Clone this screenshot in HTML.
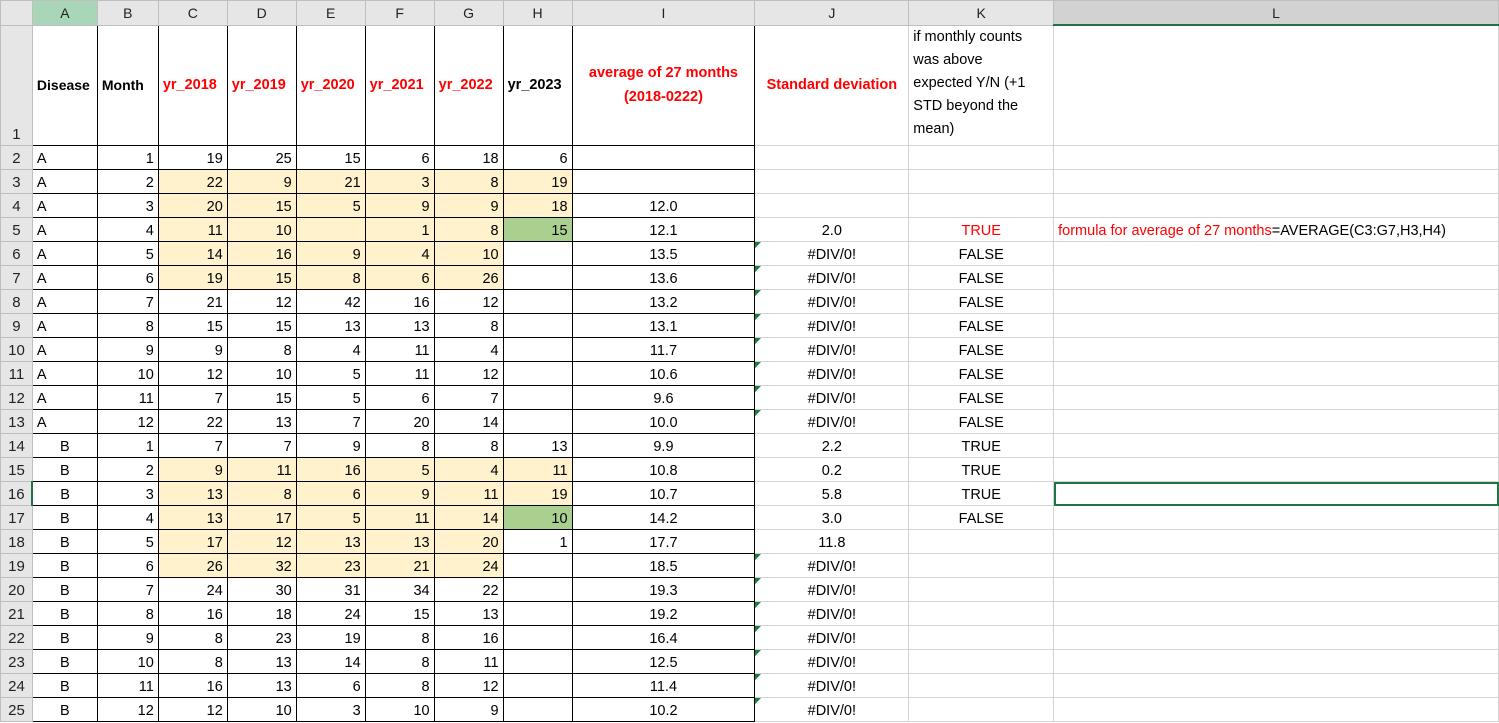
<!DOCTYPE html>
<html><head><meta charset="utf-8">
<style>
html,body{margin:0;padding:0;background:#fff;width:1499px;height:723px;overflow:hidden}
table{border-collapse:collapse;table-layout:fixed;position:absolute;left:0;top:0;font-family:"Liberation Sans",sans-serif;font-size:14.5px;color:#000}
td{height:23px;padding:0 4px;border:1px solid #000;text-align:right;white-space:nowrap;overflow:visible;vertical-align:bottom;line-height:20px;position:relative}
td.j,td.k,td.L{border:1px solid #d4d4d4;text-align:center}
td.j{border-left:1px solid #000}
td.L{text-align:left}
th{background:#e6e6e6;font-weight:normal;border:1px solid #bfbfbf;color:#222;font-size:14px;line-height:22px;height:23px;padding:0}
td.h{background:#e6e6e6;border:1px solid #bfbfbf;color:#222;text-align:center;padding:0;font-size:15px}
tr.r1 td{height:119px;vertical-align:middle}
tr.r1 td.h{vertical-align:bottom}
.y{background:#fff2cc}.g{background:#a9d08e}
.l{text-align:left}.c{text-align:center}
.red{color:#f00}.b{font-weight:bold}
.tri::before{content:"";position:absolute;left:0;top:0;border-top:6px solid #1e7b34;border-right:6px solid transparent}
.sel{outline:2px solid #217346;outline-offset:-2px}
</style></head><body>
<table>
<colgroup><col style="width:32px"><col style="width:65px"><col style="width:61px"><col style="width:69px"><col style="width:69px"><col style="width:69px"><col style="width:69px"><col style="width:69px"><col style="width:69px"><col style="width:183px"><col style="width:154px"><col style="width:145px"><col style="width:445px"></colgroup>
<tr><th></th><th style="background:#a9d5b8">A</th><th>B</th><th>C</th><th>D</th><th>E</th><th>F</th><th>G</th><th>H</th><th>I</th><th>J</th><th>K</th><th style="background:#d2d2d2;border-bottom:2px solid #217346">L</th></tr>
<tr class="r1"><td class="h">1</td><td class="l b" style="font-size:14px">Disease</td><td class="l b" style="font-size:14px">Month</td><td class="l b red">yr_2018</td><td class="l b red">yr_2019</td><td class="l b red">yr_2020</td><td class="l b red">yr_2021</td><td class="l b red">yr_2022</td><td class="l b">yr_2023</td><td class="c b red" style="line-height:24px">average of 27 months<br>(2018-0222)</td><td class="j b red">Standard deviation</td><td class="k" style="text-align:left;line-height:23px;vertical-align:top">if monthly counts<br>was above<br>expected Y/N (+1<br>STD beyond the<br>mean)</td><td class="L"></td></tr>
<tr><td class="h">2</td><td class="l">A</td><td>1</td><td>19</td><td>25</td><td>15</td><td>6</td><td>18</td><td>6</td><td></td><td class="j"></td><td class="k"></td><td class="L"></td></tr>
<tr><td class="h">3</td><td class="l">A</td><td>2</td><td class="y">22</td><td class="y">9</td><td class="y">21</td><td class="y">3</td><td class="y">8</td><td class="y">19</td><td></td><td class="j"></td><td class="k"></td><td class="L"></td></tr>
<tr><td class="h">4</td><td class="l">A</td><td>3</td><td class="y">20</td><td class="y">15</td><td class="y">5</td><td class="y">9</td><td class="y">9</td><td class="y">18</td><td class="c">12.0</td><td class="j"></td><td class="k"></td><td class="L"></td></tr>
<tr><td class="h">5</td><td class="l">A</td><td>4</td><td class="y">11</td><td class="y">10</td><td class="y"></td><td class="y">1</td><td class="y">8</td><td class="g">15</td><td class="c">12.1</td><td class="j">2.0</td><td class="k red">TRUE</td><td class="L"><span class="red">formula for average of 27 months</span>=AVERAGE(C3:G7,H3,H4)</td></tr>
<tr><td class="h">6</td><td class="l">A</td><td>5</td><td class="y">14</td><td class="y">16</td><td class="y">9</td><td class="y">4</td><td class="y">10</td><td></td><td class="c">13.5</td><td class="j tri">#DIV/0!</td><td class="k">FALSE</td><td class="L"></td></tr>
<tr><td class="h">7</td><td class="l">A</td><td>6</td><td class="y">19</td><td class="y">15</td><td class="y">8</td><td class="y">6</td><td class="y">26</td><td></td><td class="c">13.6</td><td class="j tri">#DIV/0!</td><td class="k">FALSE</td><td class="L"></td></tr>
<tr><td class="h">8</td><td class="l">A</td><td>7</td><td>21</td><td>12</td><td>42</td><td>16</td><td>12</td><td></td><td class="c">13.2</td><td class="j tri">#DIV/0!</td><td class="k">FALSE</td><td class="L"></td></tr>
<tr><td class="h">9</td><td class="l">A</td><td>8</td><td>15</td><td>15</td><td>13</td><td>13</td><td>8</td><td></td><td class="c">13.1</td><td class="j tri">#DIV/0!</td><td class="k">FALSE</td><td class="L"></td></tr>
<tr><td class="h">10</td><td class="l">A</td><td>9</td><td>9</td><td>8</td><td>4</td><td>11</td><td>4</td><td></td><td class="c">11.7</td><td class="j tri">#DIV/0!</td><td class="k">FALSE</td><td class="L"></td></tr>
<tr><td class="h">11</td><td class="l">A</td><td>10</td><td>12</td><td>10</td><td>5</td><td>11</td><td>12</td><td></td><td class="c">10.6</td><td class="j tri">#DIV/0!</td><td class="k">FALSE</td><td class="L"></td></tr>
<tr><td class="h">12</td><td class="l">A</td><td>11</td><td>7</td><td>15</td><td>5</td><td>6</td><td>7</td><td></td><td class="c">9.6</td><td class="j tri">#DIV/0!</td><td class="k">FALSE</td><td class="L"></td></tr>
<tr><td class="h">13</td><td class="l">A</td><td>12</td><td>22</td><td>13</td><td>7</td><td>20</td><td>14</td><td></td><td class="c">10.0</td><td class="j tri">#DIV/0!</td><td class="k">FALSE</td><td class="L"></td></tr>
<tr><td class="h">14</td><td class="c">B</td><td>1</td><td>7</td><td>7</td><td>9</td><td>8</td><td>8</td><td>13</td><td class="c">9.9</td><td class="j">2.2</td><td class="k">TRUE</td><td class="L"></td></tr>
<tr><td class="h">15</td><td class="c">B</td><td>2</td><td class="y">9</td><td class="y">11</td><td class="y">16</td><td class="y">5</td><td class="y">4</td><td class="y">11</td><td class="c">10.8</td><td class="j">0.2</td><td class="k">TRUE</td><td class="L"></td></tr>
<tr><td class="h" style="border-right:2px solid #217346">16</td><td class="c">B</td><td>3</td><td class="y">13</td><td class="y">8</td><td class="y">6</td><td class="y">9</td><td class="y">11</td><td class="y">19</td><td class="c">10.7</td><td class="j">5.8</td><td class="k">TRUE</td><td class="L sel"></td></tr>
<tr><td class="h">17</td><td class="c">B</td><td>4</td><td class="y">13</td><td class="y">17</td><td class="y">5</td><td class="y">11</td><td class="y">14</td><td class="g">10</td><td class="c">14.2</td><td class="j">3.0</td><td class="k">FALSE</td><td class="L"></td></tr>
<tr><td class="h">18</td><td class="c">B</td><td>5</td><td class="y">17</td><td class="y">12</td><td class="y">13</td><td class="y">13</td><td class="y">20</td><td>1</td><td class="c">17.7</td><td class="j">11.8</td><td class="k"></td><td class="L"></td></tr>
<tr><td class="h">19</td><td class="c">B</td><td>6</td><td class="y">26</td><td class="y">32</td><td class="y">23</td><td class="y">21</td><td class="y">24</td><td></td><td class="c">18.5</td><td class="j tri">#DIV/0!</td><td class="k"></td><td class="L"></td></tr>
<tr><td class="h">20</td><td class="c">B</td><td>7</td><td>24</td><td>30</td><td>31</td><td>34</td><td>22</td><td></td><td class="c">19.3</td><td class="j tri">#DIV/0!</td><td class="k"></td><td class="L"></td></tr>
<tr><td class="h">21</td><td class="c">B</td><td>8</td><td>16</td><td>18</td><td>24</td><td>15</td><td>13</td><td></td><td class="c">19.2</td><td class="j tri">#DIV/0!</td><td class="k"></td><td class="L"></td></tr>
<tr><td class="h">22</td><td class="c">B</td><td>9</td><td>8</td><td>23</td><td>19</td><td>8</td><td>16</td><td></td><td class="c">16.4</td><td class="j tri">#DIV/0!</td><td class="k"></td><td class="L"></td></tr>
<tr><td class="h">23</td><td class="c">B</td><td>10</td><td>8</td><td>13</td><td>14</td><td>8</td><td>11</td><td></td><td class="c">12.5</td><td class="j tri">#DIV/0!</td><td class="k"></td><td class="L"></td></tr>
<tr><td class="h">24</td><td class="c">B</td><td>11</td><td>16</td><td>13</td><td>6</td><td>8</td><td>12</td><td></td><td class="c">11.4</td><td class="j tri">#DIV/0!</td><td class="k"></td><td class="L"></td></tr>
<tr><td class="h">25</td><td class="c">B</td><td>12</td><td>12</td><td>10</td><td>3</td><td>10</td><td>9</td><td></td><td class="c">10.2</td><td class="j tri">#DIV/0!</td><td class="k"></td><td class="L"></td></tr>
</table>
</body></html>
